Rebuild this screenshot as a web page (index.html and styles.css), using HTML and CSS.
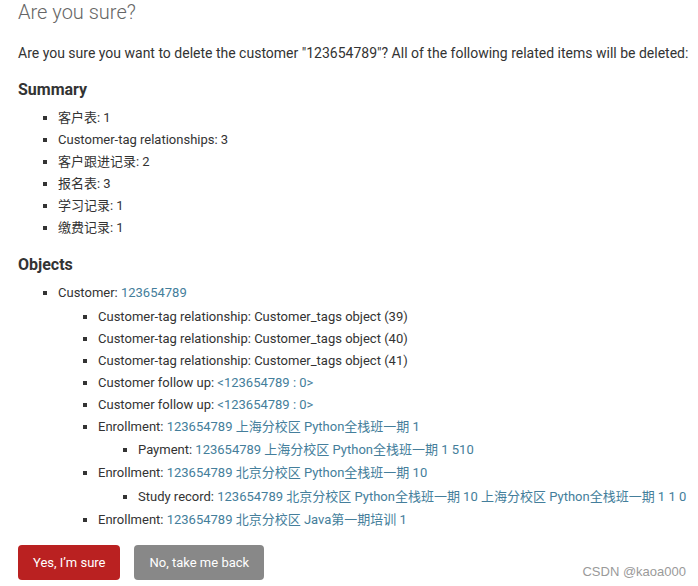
FILE: index.html
```html
<!DOCTYPE html>
<html lang="en">
<head>
<meta charset="utf-8">
<title>Are you sure?</title>
<link rel="stylesheet" href="styles.css">
</head>
<body>
<div class="content">
  <h1 class="title">Are you sure?</h1>
  <p class="lead">Are you sure you want to delete the customer "123654789"? All of the following related items will be deleted:</p>

  <h2 class="section">Summary</h2>
  <ul class="tree">
    <li>客户表: 1</li>
    <li>Customer-tag relationships: 3</li>
    <li>客户跟进记录: 2</li>
    <li>报名表: 3</li>
    <li>学习记录: 1</li>
    <li>缴费记录: 1</li>
  </ul>

  <h2 class="section section-next">Objects</h2>
  <ul class="tree">
    <li>Customer: <a href="#">123654789</a>
      <ul class="tree">
        <li>Customer-tag relationship: Customer_tags object (39)</li>
        <li>Customer-tag relationship: Customer_tags object (40)</li>
        <li>Customer-tag relationship: Customer_tags object (41)</li>
        <li>Customer follow up: <a href="#">&lt;123654789 : 0&gt;</a></li>
        <li>Customer follow up: <a href="#">&lt;123654789 : 0&gt;</a></li>
        <li>Enrollment: <a href="#">123654789 上海分校区 Python全栈班一期 1</a>
          <ul class="tree">
            <li>Payment: <a href="#">123654789 上海分校区 Python全栈班一期 1 510</a></li>
          </ul>
        </li>
        <li>Enrollment: <a href="#">123654789 北京分校区 Python全栈班一期 10</a>
          <ul class="tree">
            <li>Study record: <a href="#">123654789 北京分校区 Python全栈班一期 10 上海分校区 Python全栈班一期 1 1 0</a></li>
          </ul>
        </li>
        <li>Enrollment: <a href="#">123654789 北京分校区 Java第一期培训 1</a></li>
      </ul>
    </li>
  </ul>

  <form class="actions">
    <button type="button" class="btn btn-delete">Yes, I’m sure</button>
    <a href="#" class="btn btn-cancel">No, take me back</a>
  </form>
</div>
<div class="watermark">CSDN @kaoa000</div>
</body>
</html>
```

FILE: styles.css
```css
html, body {
  margin: 0;
  padding: 0;
  background: #fff;
}

body {
  font-family: Roboto, "Noto Sans CJK SC", sans-serif;
  color: #333;
  font-size: 13px;
  position: relative;
  min-height: 586px;
}

.content {
  padding: 0 0 0 18px;
}

.title {
  margin: 0;
  font-size: 20px;
  font-weight: 300;
  line-height: 24px;
  color: #666;
}

.lead {
  margin: 19px 0 0;
  font-size: 14px;
  line-height: 20px;
  white-space: nowrap;
}

.section {
  margin: 17px 0 7px;
  font-size: 16px;
  font-weight: 700;
  line-height: 20px;
  color: #333;
}

.section-next {
  margin-top: 16px;
}

.tree {
  margin: 2.6px 0 0;
  padding: 0 0 0 40px;
}

.tree li {
  list-style-type: square;
  padding: 1px 0;
  font-size: 13px;
  line-height: 20px;
  white-space: nowrap;
}

.tree a {
  color: #447e9b;
  text-decoration: none;
}

.actions {
  margin: 13px 0 0;
  display: flex;
  align-items: center;
  gap: 14px;
}

.btn {
  display: inline-block;
  height: 35px;
  line-height: 15px;
  padding: 10px 15px;
  box-sizing: border-box;
  border: none;
  border-radius: 4px;
  font-family: Roboto, sans-serif;
  font-size: 13px;
  color: #fff;
  text-decoration: none;
  cursor: pointer;
}

.btn-delete {
  background: #ba2121;
}

.btn-cancel {
  background: #888;
}

.watermark {
  position: absolute;
  right: 12px;
  top: 564px;
  font-family: "Liberation Sans", Arial, sans-serif;
  font-size: 13px;
  color: #9a9a9a;
}
```
